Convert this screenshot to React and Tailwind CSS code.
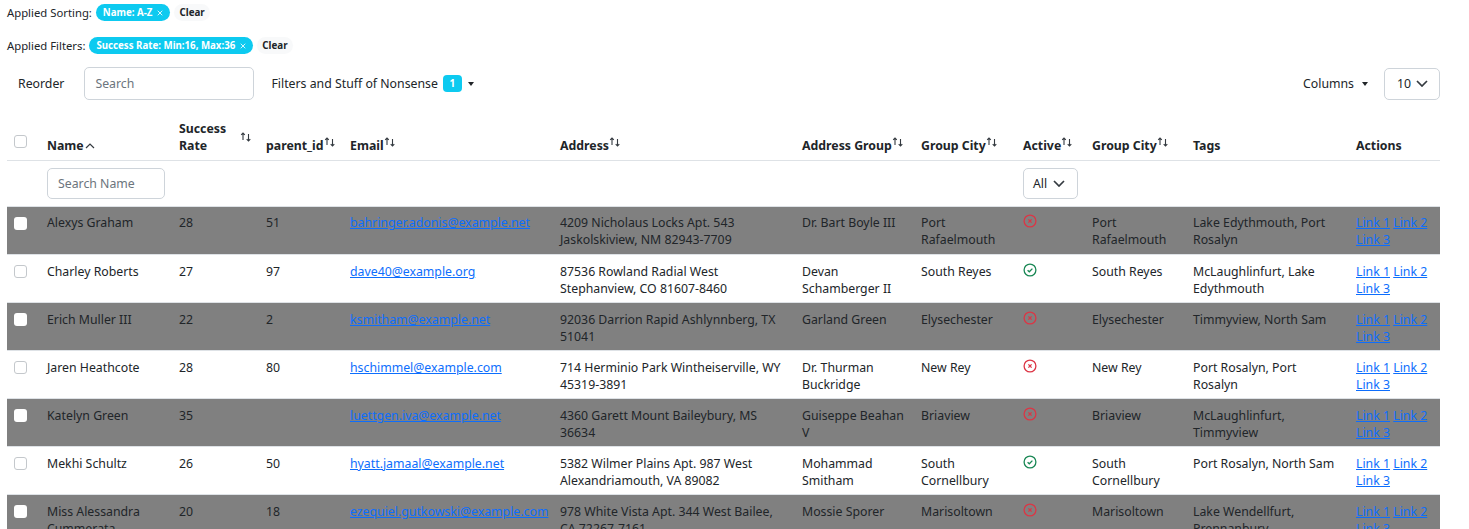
import React from 'react';
import { X } from 'lucide-react';

const rows = [
  { name: 'Alexys Graham', rate: 28, parent: 51, email: 'bahringer.adonis@example.net', address: '4209 Nicholaus Locks Apt. 543 Jaskolskiview, NM 82943-7709', group: 'Dr. Bart Boyle III', city: 'Port Rafaelmouth', active: false, tags: 'Lake Edythmouth, Port Rosalyn' },
  { name: 'Charley Roberts', rate: 27, parent: 97, email: 'dave40@example.org', address: '87536 Rowland Radial West Stephanview, CO 81607-8460', group: 'Devan Schamberger II', city: 'South Reyes', active: true, tags: 'McLaughlinfurt, Lake Edythmouth' },
  { name: 'Erich Muller III', rate: 22, parent: 2, email: 'ksmitham@example.net', address: '92036 Darrion Rapid Ashlynnberg, TX 51041', group: 'Garland Green', city: 'Elysechester', active: false, tags: 'Timmyview, North Sam' },
  { name: 'Jaren Heathcote', rate: 28, parent: 80, email: 'hschimmel@example.com', address: '714 Herminio Park Wintheiserville, WY 45319-3891', group: 'Dr. Thurman Buckridge', city: 'New Rey', active: false, tags: 'Port Rosalyn, Port Rosalyn' },
  { name: 'Katelyn Green', rate: 35, parent: '', email: 'luettgen.iva@example.net', address: '4360 Garett Mount Baileybury, MS 36634', group: 'Guiseppe Beahan V', city: 'Briaview', active: false, tags: 'McLaughlinfurt, Timmyview' },
  { name: 'Mekhi Schultz', rate: 26, parent: 50, email: 'hyatt.jamaal@example.net', address: '5382 Wilmer Plains Apt. 987 West Alexandriamouth, VA 89082', group: 'Mohammad Smitham', city: 'South Cornellbury', active: true, tags: 'Port Rosalyn, North Sam' },
  { name: 'Miss Alessandra Cummerata', rate: 20, parent: 18, email: 'ezequiel.gutkowski@example.com', address: '978 White Vista Apt. 344 West Bailee, CA 72267-7161', group: 'Mossie Sporer', city: 'Marisoltown', active: false, tags: 'Lake Wendellfurt, Prennanbury' },
];

// the little up/down pair next to sortable headers
function SortIcon() {
  return (
    <svg width="12" height="10" viewBox="0 0 12 10" fill="none" stroke="#343a40" strokeWidth="1.1" className="inline-block align-[3px]">
      <path d="M3 8V1M1.2 2.8L3 1l1.8 1.8M8.5 2v7M6.7 7.2L8.5 9l1.8-1.8" />
    </svg>
  );
}

function Chevron() {
  return (
    <svg width="12" height="7" viewBox="0 0 12 7" fill="none" stroke="#343a40" strokeWidth="1.7" className="block shrink-0">
      <path d="M1 1l5 5 5-5" />
    </svg>
  );
}

function Caret({ className = '' }) {
  return <span className={`inline-block border-x-[3.5px] border-t-[4px] border-x-transparent border-t-[#212529] ${className}`} />;
}

function StatusIcon({ ok }) {
  return (
    <svg width="14" height="14" viewBox="0 0 14 14" fill="none" stroke={ok ? '#198754' : '#dc3545'} strokeWidth="1.3" className="block">
      <circle cx="7" cy="7" r="5.9" />
      {ok ? <path d="M4.6 7.2l1.7 1.6 3.1-3.2" /> : <path d="M5.4 5.4l3.2 3.2M8.6 5.4l-3.2 3.2" />}
    </svg>
  );
}

function Chip({ children }) {
  return (
    <span className="inline-flex items-center h-[17px] pl-[7px] pr-[6px] gap-[4px] rounded-full bg-[#0dcaf0] text-white text-[9.7px] font-bold">
      {children}
      <X size={8} strokeWidth={2.5} />
    </span>
  );
}

function Clear() {
  return <span className="inline-flex items-center h-[17px] px-[5px] rounded-full bg-[#f8f9fa] text-[#212529] text-[9.8px] font-bold">Clear</span>;
}

function Th({ children, sort }) {
  return (
    <th className="px-2 pt-2 pb-[6px] text-left align-bottom font-bold whitespace-nowrap">
      {children}
      {sort && <SortIcon />}
    </th>
  );
}

function Row({ row, striped, first }) {
  // first row sits a pixel higher than the rest
  const td = first ? 'px-2 pt-[7px] pb-[6px] align-top' : 'px-2 pt-[8px] pb-[5px] align-top';
  return (
    <tr className={`border-b border-[#dee2e6] ${striped ? 'bg-[#808080]' : 'bg-white'}`}>
      <td className="pl-[7px] pr-0 pt-[10px] align-top">
        <span className={`block w-[13px] h-[13px] rounded-[3px] bg-white ${striped ? '' : 'border border-[#c4c8cc]'}`} />
      </td>
      <td className={td}>{row.name}</td>
      <td className={td}>{row.rate}</td>
      <td className={td}>{row.parent}</td>
      <td className={`${td} whitespace-nowrap`}>
        <a href="#" className="text-[#0d6efd] underline">{row.email}</a>
      </td>
      <td className={td}>{row.address}</td>
      <td className={td}>{row.group}</td>
      <td className={td}>{row.city}</td>
      <td className={td}><StatusIcon ok={row.active} /></td>
      <td className={td}>{row.city}</td>
      <td className={td}>{row.tags}</td>
      <td className={td}>
        <a href="#" className="text-[#0d6efd] underline">Link 1</a>{' '}
        <a href="#" className="text-[#0d6efd] underline">Link 2</a>{' '}
        <a href="#" className="text-[#0d6efd] underline">Link 3</a>
      </td>
    </tr>
  );
}

export default function App() {
  return (
    <div className="h-[529px] overflow-hidden bg-white text-[#212529] text-[12.3px] leading-[17px] font-['Noto_Sans',sans-serif]">
      <div className="pt-[4px] flex items-center h-[21px] pl-[7px]">
        <span className="text-[11.3px]">Applied Sorting:</span>
        <span className="ml-[4px] flex"><Chip>Name: A-Z</Chip></span>
        <span className="ml-[4px] flex"><Clear /></span>
      </div>
      <div className="flex items-center h-[17px] mt-[16px] pl-[7px]">
        <span className="text-[11.3px]">Applied Filters:</span>
        <span className="ml-[4px] flex"><Chip>Success Rate: Min:16, Max:36</Chip></span>
        <span className="ml-[4px] flex"><Clear /></span>
      </div>

      <div className="flex items-center h-[33px] mt-[13px] pl-[18px] pr-[29px]">
        <span>Reorder</span>
        <div className="ml-[20px] w-[170px] h-[33px] flex items-center px-[10px] border border-[#ced4da] rounded-[5px] text-[#6c757d]">Search</div>
        <span className="ml-[17px]">Filters and Stuff of Nonsense</span>
        <span className="ml-[5px] h-[17px] w-[19px] flex items-center justify-center rounded-[4px] bg-[#0dcaf0] text-white text-[10px] font-bold">1</span>
        <Caret className="ml-[6px]" />
        <div className="ml-auto flex items-center">
          <span>Columns</span>
          <Caret className="ml-[8px]" />
          <div className="ml-[16px] w-[56px] h-[32px] flex items-center gap-[5px] px-[12px] border border-[#ced4da] rounded-[5px]">
            10
            <Chevron />
          </div>
        </div>
      </div>

      <div className="mt-[12px] ml-[7px] w-[1433px]">
        <table className="w-full table-fixed border-collapse">
          <colgroup>
            <col className="w-[32px]" />
            <col className="w-[132px]" />
            <col className="w-[87px]" />
            <col className="w-[84px]" />
            <col className="w-[210px]" />
            <col className="w-[242px]" />
            <col className="w-[119px]" />
            <col className="w-[102px]" />
            <col className="w-[69px]" />
            <col className="w-[101px]" />
            <col className="w-[163px]" />
            <col className="w-[92px]" />
          </colgroup>
          <thead>
            <tr className="border-b border-[#dee2e6]">
              <th className="pl-[7px] pr-0 pb-[12px] align-bottom">
                <span className="block w-[13px] h-[13px] rounded-[3px] border border-[#c4c8cc]" />
              </th>
              <th className="px-2 pt-2 pb-[6px] text-left align-bottom font-bold whitespace-nowrap">
                <span className="flex items-center gap-[1px]">
                  Name
                  <svg width="10" height="6" viewBox="0 0 10 6" fill="none" stroke="#343a40" strokeWidth="1.2" className="block">
                    <path d="M1 5l4-4 4 4" />
                  </svg>
                </span>
              </th>
              <th className="px-2 pt-2 pb-[6px] text-left align-bottom font-bold">
                <div className="flex items-center justify-between -mr-[2px]">
                  <span>Success<br />Rate</span>
                  <SortIcon />
                </div>
              </th>
              <Th sort>parent_id</Th>
              <Th sort>Email</Th>
              <Th sort>Address</Th>
              <Th sort>Address Group</Th>
              <Th sort>Group City</Th>
              <Th sort>Active</Th>
              <Th sort>Group City</Th>
              <Th>Tags</Th>
              <Th>Actions</Th>
            </tr>
            <tr className="border-b border-[#dee2e6]">
              <th />
              <th className="px-2 py-[7px] text-left font-normal">
                <div className="w-[118px] h-[31px] flex items-center px-[10px] border border-[#ced4da] rounded-[5px] text-[#6c757d]">Search Name</div>
              </th>
              <th colSpan={6} />
              <th className="px-2 py-[7px] text-left font-normal">
                <div className="w-[55px] h-[31px] flex items-center gap-[6px] px-[9px] border border-[#ced4da] rounded-[5px]">
                  All
                  <Chevron />
                </div>
              </th>
              <th colSpan={3} />
            </tr>
          </thead>
          <tbody>
            {rows.map((row, i) => (
              <Row key={row.email} row={row} striped={i % 2 === 0} first={i === 0} />
            ))}
          </tbody>
        </table>
      </div>
    </div>
  );
}
